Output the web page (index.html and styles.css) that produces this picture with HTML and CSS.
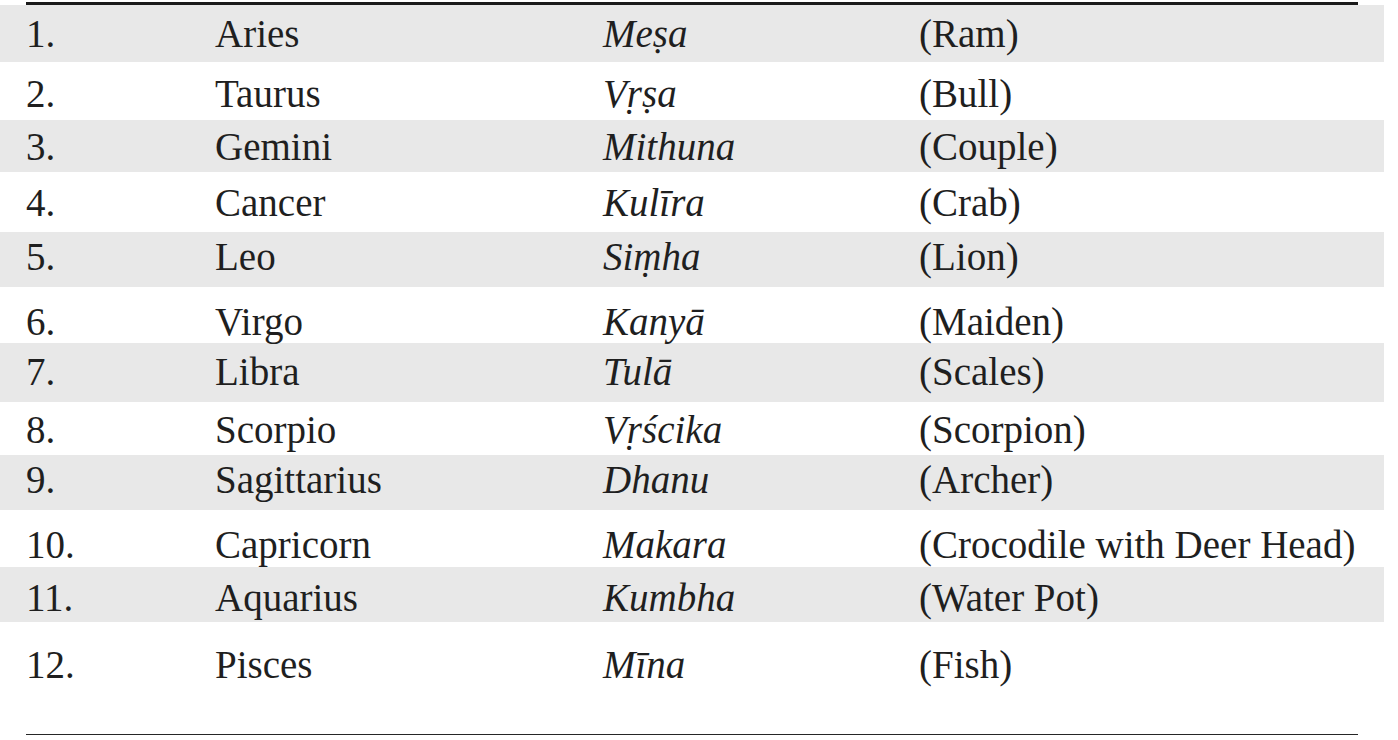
FILE: index.html
```html
<!DOCTYPE html>
<html lang="en">
<head>
<meta charset="utf-8">
<title>Rāśis</title>
<link rel="stylesheet" href="styles.css">
</head>
<body>
<div class="signs">
  <div class="rule-top"></div>
  <div class="row shade"><span class="num">1.</span><span class="name">Aries</span><span class="skt">Meṣa</span><span class="mean">(Ram)</span></div>
  <div class="row"><span class="num">2.</span><span class="name">Taurus</span><span class="skt">Vṛṣa</span><span class="mean">(Bull)</span></div>
  <div class="row shade"><span class="num">3.</span><span class="name">Gemini</span><span class="skt">Mithuna</span><span class="mean">(Couple)</span></div>
  <div class="row"><span class="num">4.</span><span class="name">Cancer</span><span class="skt">Kulīra</span><span class="mean">(Crab)</span></div>
  <div class="row shade"><span class="num">5.</span><span class="name">Leo</span><span class="skt">Siṃha</span><span class="mean">(Lion)</span></div>
  <div class="row"><span class="num">6.</span><span class="name">Virgo</span><span class="skt">Kanyā</span><span class="mean">(Maiden)</span></div>
  <div class="row shade"><span class="num">7.</span><span class="name">Libra</span><span class="skt">Tulā</span><span class="mean">(Scales)</span></div>
  <div class="row"><span class="num">8.</span><span class="name">Scorpio</span><span class="skt">Vṛścika</span><span class="mean">(Scorpion)</span></div>
  <div class="row shade"><span class="num">9.</span><span class="name">Sagittarius</span><span class="skt">Dhanu</span><span class="mean">(Archer)</span></div>
  <div class="row"><span class="num">10.</span><span class="name">Capricorn</span><span class="skt">Makara</span><span class="mean">(Crocodile with Deer Head)</span></div>
  <div class="row shade"><span class="num">11.</span><span class="name">Aquarius</span><span class="skt">Kumbha</span><span class="mean">(Water Pot)</span></div>
  <div class="row"><span class="num">12.</span><span class="name">Pisces</span><span class="skt">Mīna</span><span class="mean">(Fish)</span></div>
  <div class="rule-bottom"></div>
</div>
</body>
</html>
```

FILE: styles.css
```css
html, body {
  margin: 0;
  padding: 0;
  background: #ffffff;
}

body {
  font-family: "Liberation Serif", "Times New Roman", serif;
  font-size: 39px;
  line-height: 44px;
  color: #1f1f1f;
}

.signs {
  width: 1384px;
  padding-top: 2px;
}

.rule-top {
  height: 3px;
  width: 1332px;
  margin-left: 26px;
  background: #1a1a1a;
}

.rule-bottom {
  height: 1px;
  width: 1332px;
  margin-left: 26px;
  background: #262626;
}

.row {
  display: grid;
  grid-template-columns: 189px 388px 316px 1fr;
  padding-left: 26px;
  box-sizing: border-box;
  white-space: nowrap;
}

.shade {
  background: #e8e8e8;
}

.skt {
  font-style: italic;
}

/* per-row heights and baseline offsets, following the typeset source */
.row:nth-child(2)  { height: 57px;  padding-top: 7px; }
.row:nth-child(3)  { height: 58px;  padding-top: 10px; }
.row:nth-child(4)  { height: 52px;  padding-top: 5px; }
.row:nth-child(5)  { height: 60px;  padding-top: 9px; }
.row:nth-child(6)  { height: 55px;  padding-top: 3px; }
.row:nth-child(7)  { height: 56px;  padding-top: 13px; }
.row:nth-child(8)  { height: 59px;  padding-top: 7px; }
.row:nth-child(9)  { height: 53px;  padding-top: 6px; }
.row:nth-child(10) { height: 55px;  padding-top: 3px; }
.row:nth-child(11) { height: 57px;  padding-top: 13px; }
.row:nth-child(12) { height: 55px;  padding-top: 9px; }
.row:nth-child(13) { height: 112px; padding-top: 21px; }
```
